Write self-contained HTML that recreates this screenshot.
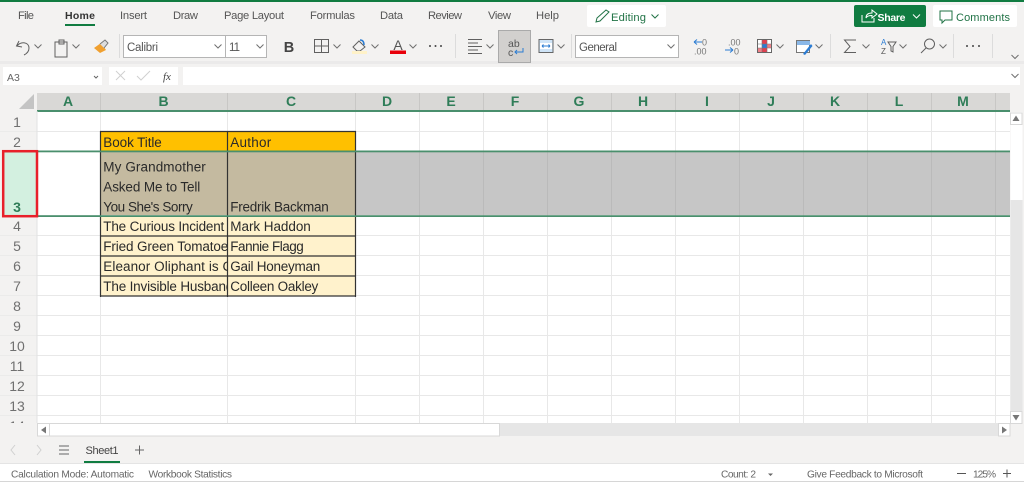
<!DOCTYPE html>
<html><head><meta charset="utf-8"><style>
html,body{margin:0;padding:0;background:#f3f2f1;width:1024px;height:482px;overflow:hidden}
svg{display:block;font-family:"Liberation Sans",Arial,sans-serif;filter:blur(.3px)}
.t{font-size:11.2px;fill:#555}
.c{font-size:13.5px;fill:#2a2a2a}
.h{font-size:14px;font-weight:bold;fill:#2f7d58;text-anchor:middle}
.r{font-size:14px;fill:#707070;text-anchor:middle}
.s{font-size:10.2px;fill:#666}
.g{stroke:#e8e8e8;stroke-width:1;fill:none}
.i{fill:none;stroke:#606060;stroke-width:1}
</style></head><body>
<svg width="1024" height="482" viewBox="0 0 1024 482" xmlns="http://www.w3.org/2000/svg">
<defs>
<path id="v" d="M-3.5 -2 L0 1.5 L3.5 -2" fill="none" stroke="#707070" stroke-width="1"/>
<clipPath id="cb"><rect x="100" y="216" width="127" height="80"/></clipPath>
</defs>
<rect width="1024" height="482" fill="#f3f2f1"/>
<rect width="1024" height="2" fill="#107c41"/>
<rect y="61" width="1024" height="3" fill="#ebeaea"/>

<!-- tabs -->
<text class="t" x="18" y="19" textLength="16">File</text>
<text class="t" x="65" y="19" textLength="30" style="fill:#333;font-weight:bold;font-size:10.5px">Home</text>
<rect x="65" y="24" width="30" height="2" fill="#107c41"/>
<text class="t" x="120" y="19" textLength="27">Insert</text>
<text class="t" x="173" y="19" textLength="25">Draw</text>
<text class="t" x="224" y="19" textLength="60">Page Layout</text>
<text class="t" x="310" y="19" textLength="45">Formulas</text>
<text class="t" x="380" y="19" textLength="23">Data</text>
<text class="t" x="428" y="19" textLength="34">Review</text>
<text class="t" x="488" y="19" textLength="23">View</text>
<text class="t" x="536" y="19" textLength="23">Help</text>

<!-- editing -->
<rect x="587" y="5" width="79" height="22" rx="2" fill="#fff"/>
<path d="M596 22 L597 18 L606 10 L609 12 L600 21 Z" fill="none" stroke="#217346"/>
<text x="611" y="21" font-size="11.200" fill="#217346" textLength="35">Editing</text>
<path d="M651.500 14.500 L655 18 L658.500 14.500" fill="none" stroke="#217346"/>
<!-- share -->
<rect x="854" y="5" width="72" height="22" rx="2" fill="#107c41"/>
<path d="M862 15 V22 H874 V18 M866 18 C866 14 869 13 872 13 V10 L877 14 L872 18 V15.500 C869 15.500 867 16 866 18 Z" fill="none" stroke="#fff"/>
<text x="877.500" y="21" font-size="10.500" font-weight="bold" fill="#fff" textLength="28">Share</text>
<path d="M913 14.500 L916.500 18 L920 14.500" fill="none" stroke="#fff"/>
<!-- comments -->
<rect x="933" y="5" width="84" height="22" rx="2" fill="#fff"/>
<path d="M940 11 H952 V20 H945 L942 23 V20 H940 Z" fill="none" stroke="#217346"/>
<text x="956" y="21" font-size="11" fill="#217346" textLength="54">Comments</text>

<!-- undo -->
<path d="M19 41 L16.500 46 L22 47 M17 46 C21 41 29 42 29 48 C29 52 26 54 24 55" class="i"/>
<use href="#v" x="38" y="46.500"/>
<!-- paste -->
<path d="M56 42 H59 M64 42 H67 V57 H55 V42 Z M59 40 H64 V44 H59 Z" class="i"/>
<use href="#v" x="76" y="46.500"/>
<!-- brush -->
<path d="M94 48 L101 43 L106 50 L100 53 Z" fill="#f0a030"/>
<path d="M100 44 L105 40 L108 43 L104 48" fill="#ddd" stroke="#777"/>
<line x1="119.500" y1="34" x2="119.500" y2="58" stroke="#dcdcdc"/>

<!-- font -->
<rect x="123.500" y="35.500" width="102" height="22" fill="#fff" stroke="#b5b5b5"/>
<text x="127" y="51" font-size="11.500" fill="#555" textLength="31">Calibri</text>
<use href="#v" x="218" y="46.500"/>
<rect x="225.500" y="35.500" width="41" height="22" fill="#fff" stroke="#b5b5b5"/>
<text x="229" y="51" font-size="11.500" fill="#555" textLength="11">11</text>
<use href="#v" x="260" y="46.500"/>
<text x="289" y="52" font-size="14.500" font-weight="bold" fill="#444" text-anchor="middle">B</text>
<!-- borders -->
<path d="M314.500 39.500 H328.500 V52.500 H314.500 Z M321.500 39.500 V52.500 M314.500 46 H328.500" class="i"/>
<use href="#v" x="337" y="46.500"/>
<!-- fill -->
<path d="M353 47 L359 41 L365 47 L360 51 H357 Z" class="i"/>
<path d="M360 40 C363 40 364 42 364 45" fill="none" stroke="#2b7cd3" stroke-width="1.500"/>
<rect x="352" y="51" width="15" height="3" fill="#fff2c8"/>
<use href="#v" x="375" y="46.500"/>
<!-- font colour -->
<text x="398" y="50" font-size="14" fill="#555" text-anchor="middle">A</text>
<rect x="390" y="50.500" width="16" height="3.500" fill="#e8000b"/>
<use href="#v" x="413" y="46.500"/>
<circle cx="430" cy="46" r="1" fill="#444"/><circle cx="435.500" cy="46" r="1" fill="#444"/><circle cx="441" cy="46" r="1" fill="#444"/>
<line x1="455.500" y1="34" x2="455.500" y2="58" stroke="#dcdcdc"/>
<!-- align -->
<path d="M468 39.500 H482 M468 43 H478 M468 46.500 H482 M468 50 H478 M468 53.500 H482" class="i"/>
<use href="#v" x="490" y="46.500"/>
<!-- wrap -->
<rect x="498.500" y="30.500" width="32" height="32" fill="#d2d0ce" stroke="#aaa"/>
<text x="508" y="47" font-size="10.500" fill="#555">ab</text>
<text x="508" y="56" font-size="10.500" fill="#555">c</text>
<path d="M523 48 V52 H515 M517 50 L515 52 L517 54" fill="none" stroke="#2b7cd3"/>
<!-- merge -->
<rect x="539" y="39.500" width="14" height="13" fill="#cfe4f7" stroke="#666"/>
<rect x="540" y="43" width="12" height="6" fill="#fff"/>
<path d="M542 46 H550 M542 46 L543.500 44.500 M542 46 L543.500 47.500 M550 46 L548.500 44.500 M550 46 L548.500 47.500" fill="none" stroke="#2b7cd3"/>
<use href="#v" x="561" y="46.500"/>
<line x1="571.500" y1="34" x2="571.500" y2="58" stroke="#dcdcdc"/>
<!-- general -->
<rect x="575.500" y="35.500" width="103" height="22" fill="#fff" stroke="#b5b5b5"/>
<text x="579" y="51" font-size="11.500" fill="#555" textLength="38">General</text>
<use href="#v" x="671" y="46.500"/>
<!-- decimals -->
<path d="M694 42 H702 M694 42 L697 39.500 M694 42 L697 44.500" fill="none" stroke="#2b7cd3"/>
<text x="702" y="45.500" font-size="9" fill="#777">0</text>
<text x="694" y="54.500" font-size="9" fill="#777">.00</text>
<text x="728" y="45.500" font-size="9" fill="#777">.00</text>
<path d="M725 50 H733 M733 50 L730 47.500 M733 50 L730 52.500" fill="none" stroke="#2b7cd3"/>
<text x="734" y="54.500" font-size="9" fill="#777">0</text>
<!-- conditional -->
<rect x="757.500" y="39.500" width="14" height="13" fill="#fff" stroke="#666"/>
<rect x="762" y="40" width="5" height="4" fill="#e04050"/><rect x="762" y="44" width="5" height="4" fill="#2b7cd3"/><rect x="758" y="48" width="4" height="4" fill="#f08088"/><rect x="762" y="48" width="5" height="4" fill="#e04050"/><rect x="767" y="44" width="4" height="4" fill="#f08088"/>
<path d="M757.500 44 H771.500 M757.500 48 H771.500 M762 39.500 V52.500 M767 39.500 V52.500" fill="none" stroke="#777" stroke-width=".6"/>
<use href="#v" x="780" y="46.500"/>
<!-- table style -->
<rect x="796.500" y="40.500" width="13" height="12" fill="#fff" stroke="#777"/>
<rect x="797" y="41" width="13" height="4" fill="#8ab8e8"/>
<path d="M803 54 L811 44 L812.500 46 L805 55 Z" fill="#2b7cd3"/>
<use href="#v" x="819" y="46.500"/>
<line x1="830.500" y1="34" x2="830.500" y2="58" stroke="#dcdcdc"/>
<!-- sigma -->
<path d="M856 40 H844.500 L850 46.500 L844.500 52.500 H856" class="i"/>
<use href="#v" x="866" y="46.500"/>
<!-- sort -->
<text x="881" y="45" font-size="8" fill="#2b7cd3">A</text>
<text x="881" y="54" font-size="8" fill="#555">Z</text>
<path d="M888 42 H896 L893 46.500 V52 L891 51 V46.500 Z" class="i"/>
<use href="#v" x="903" y="46.500"/>
<!-- search -->
<circle cx="929.500" cy="44" r="5" class="i"/>
<path d="M926 48 L921 53" class="i"/>
<use href="#v" x="943" y="46.500"/>
<line x1="953.500" y1="34" x2="953.500" y2="58" stroke="#dcdcdc"/>
<circle cx="967" cy="46" r="1" fill="#444"/><circle cx="973" cy="46" r="1" fill="#444"/><circle cx="979" cy="46" r="1" fill="#444"/>
<line x1="992.500" y1="34" x2="992.500" y2="58" stroke="#dcdcdc"/>
<use href="#v" x="1015" y="57"/>

<!-- formula bar -->
<rect x="3" y="67" width="99" height="18" fill="#fff"/>
<text x="7" y="81" font-size="10.500" fill="#666">A3</text>
<path d="M94 76 L96 78 L98 76" fill="none" stroke="#666"/>
<rect x="109" y="67" width="69" height="18" fill="#fff"/>
<path d="M116 71 L125 80 M125 71 L116 80" fill="none" stroke="#d0d0d0"/>
<path d="M137 76 L141 80 L150 71" fill="none" stroke="#d0d0d0"/>
<text x="163" y="80" font-size="11" font-family="Liberation Serif" font-style="italic" fill="#444">fx</text>
<rect x="183" y="67" width="837" height="18" fill="#fff"/>
<use href="#v" x="1015" y="76"/>

<!-- grid bg -->
<rect x="37" y="111" width="973" height="312" fill="#fff"/>
<!-- column header -->
<rect x="37" y="93" width="973" height="17" fill="#d9d8d6"/>
<path d="M19 109 H34 V94 Z" fill="#c4c4c4"/>
<g stroke="#c8c7c5"><path d="M100.500 93V110M227.500 93V110M355.500 93V110M419.500 93V110M483.500 93V110M547.500 93V110M611.500 93V110M675.500 93V110M739.500 93V110M803.500 93V110M867.500 93V110M931.500 93V110M995.500 93V110"/></g>
<text class="h" x="68" y="106">A</text><text class="h" x="163.500" y="106">B</text><text class="h" x="291" y="106">C</text><text class="h" x="387" y="106">D</text><text class="h" x="451" y="106">E</text><text class="h" x="515" y="106">F</text><text class="h" x="579" y="106">G</text><text class="h" x="643" y="106">H</text><text class="h" x="707" y="106">I</text><text class="h" x="771" y="106">J</text><text class="h" x="835" y="106">K</text><text class="h" x="899" y="106">L</text><text class="h" x="963" y="106">M</text>
<rect x="37" y="110" width="973" height="2" fill="#4a8f6d"/>

<!-- grid lines -->
<path class="g" d="M100.500 112V423M227.500 112V423M355.500 112V423M419.500 112V423M483.500 112V423M547.500 112V423M611.500 112V423M675.500 112V423M739.500 112V423M803.500 112V423M867.500 112V423M931.500 112V423M995.500 112V423"/>
<path class="g" d="M37 131.500H1010M37 235.500H1010M37 255.500H1010M37 275.500H1010M37 295.500H1010M37 315.500H1010M37 335.500H1010M37 355.500H1010M37 375.500H1010M37 395.500H1010M37 415.500H1010"/>

<!-- row numbers -->
<path d="M0 131.500H37M0 235.500H37M0 255.500H37M0 275.500H37M0 295.500H37M0 315.500H37M0 335.500H37M0 355.500H37M0 375.500H37M0 395.500H37M0 415.500H37" stroke="#ebebea" fill="none"/>
<rect x="36.500" y="111" width="1" height="312" fill="#e2e2e2"/>
<text class="r" x="17" y="127">1</text><text class="r" x="17" y="147">2</text><text class="r" x="17" y="231">4</text><text class="r" x="17" y="251">5</text><text class="r" x="17" y="271">6</text><text class="r" x="17" y="291">7</text><text class="r" x="17" y="311">8</text><text class="r" x="17" y="331">9</text><text class="r" x="17" y="351">10</text><text class="r" x="17" y="371">11</text><text class="r" x="17" y="391">12</text><text class="r" x="17" y="411">13</text><text class="r" x="17" y="431">14</text>
<rect x="0" y="423" width="37" height="13" fill="#f3f2f1"/>

<!-- selected row -->
<rect x="100" y="152" width="910" height="63" fill="#c6c6c6"/>
<path d="M419.500 152V215M483.500 152V215M547.500 152V215M611.500 152V215M675.500 152V215M739.500 152V215M803.500 152V215M867.500 152V215M931.500 152V215M995.500 152V215" stroke="#bababa"/>
<rect x="4" y="152" width="33" height="64" fill="#d3f0e0"/>
<text x="17" y="212" font-size="14" font-weight="bold" fill="#2f7d58" text-anchor="middle">3</text>

<!-- table -->
<rect x="100" y="131" width="255" height="20" fill="#ffc000"/>
<rect x="100" y="152" width="255" height="63" fill="#c4baa0"/>
<rect x="100" y="216" width="255" height="80" fill="#fff2cc"/>
<path d="M100 131.500H356M100 236H356M100 256H356M100 276H356M100 296H356M100.500 131V297M227.500 131V297M355.500 131V297" stroke="#333" stroke-width="1.200" fill="none"/>
<rect x="3" y="150.500" width="1007" height="1.800" fill="#4a8f6d"/>
<rect x="3" y="215.200" width="1007" height="1.800" fill="#4a8f6d"/>
<rect x="3.200" y="151.200" width="33.800" height="65" fill="none" stroke="#e8202a" stroke-width="2.500"/>

<text class="c" x="103.300" y="147" textLength="58.500">Book Title</text>
<text class="c" x="230.300" y="147" textLength="41">Author</text>
<text class="c" x="103.300" y="171.500" textLength="102.500">My Grandmother</text>
<text class="c" x="103.300" y="191.500" textLength="97">Asked Me to Tell</text>
<text class="c" x="103.300" y="211.500" textLength="89.500">You She's Sorry</text>
<text class="c" x="230.300" y="211.500" textLength="98.500">Fredrik Backman</text>
<text class="c" x="103.300" y="231" textLength="121">The Curious Incident</text>
<text class="c" x="230.300" y="231" textLength="80.500">Mark Haddon</text>
<text class="c" x="103.300" y="251" textLength="125" clip-path="url(#cb)">Fried Green Tomatoe</text>
<text class="c" x="230.300" y="251" textLength="73.500">Fannie Flagg</text>
<text class="c" x="103.300" y="271" textLength="129" clip-path="url(#cb)">Eleanor Oliphant is C</text>
<text class="c" x="230.300" y="271" textLength="90">Gail Honeyman</text>
<text class="c" x="103.300" y="291" textLength="130" clip-path="url(#cb)">The Invisible Husband</text>
<text class="c" x="230.300" y="291" textLength="88">Colleen Oakley</text>

<!-- vertical scrollbar -->
<rect x="1010" y="93" width="14" height="343" fill="#f3f2f1"/>
<rect x="1010.500" y="124" width="12" height="287" fill="#e6e6e6"/>
<rect x="1010.500" y="112" width="12" height="88" fill="#fff"/>
<rect x="1010.500" y="113" width="11.500" height="11.500" fill="#fff" stroke="#d8d8d8"/>
<path d="M1012.500 121 L1016 115.500 L1019.500 121 Z" fill="#777"/>
<rect x="1010.500" y="411.500" width="11.500" height="12" fill="#fff" stroke="#d8d8d8"/>
<path d="M1012.500 415 L1016 420.500 L1019.500 415 Z" fill="#777"/>

<!-- horizontal scrollbar -->
<rect x="37" y="423" width="973" height="13" fill="#e6e6e6"/>
<rect x="37.500" y="423.500" width="462" height="12.500" fill="#fff" stroke="#d8d8d8"/>
<rect x="37.500" y="423.500" width="12" height="12.500" fill="#fff" stroke="#d8d8d8"/>
<path d="M46 426.500 L41 430 L46 433.500 Z" fill="#777"/>
<rect x="998.500" y="423.500" width="11.500" height="12.500" fill="#fff" stroke="#d8d8d8"/>
<path d="M1002 426.500 L1007 430 L1002 433.500 Z" fill="#777"/>

<!-- sheet tabs -->
<path d="M15 445 L11 450 L15 455" fill="none" stroke="#d0d0d0"/>
<path d="M37 445 L41 450 L37 455" fill="none" stroke="#d0d0d0"/>
<path d="M59 446H69M59 450H69M59 454H69" fill="none" stroke="#666"/>
<text x="85.500" y="454" font-size="11" fill="#444" textLength="33">Sheet1</text>
<rect x="84" y="461" width="36" height="2" fill="#107c41"/>
<path d="M135 450H144M139.500 445.500V454.500" fill="none" stroke="#666"/>

<!-- status -->
<rect y="463" width="1024" height="18" fill="#fff"/>
<rect y="463" width="1024" height="1" fill="#e4e4e4"/>
<rect y="481" width="1024" height="1" fill="#d6d6d6"/>
<text class="s" x="11" y="477.500" textLength="123">Calculation Mode: Automatic</text>
<text class="s" x="148.500" y="477.500" textLength="83.500">Workbook Statistics</text>
<text class="s" x="721" y="477.500" textLength="35">Count: 2</text>
<path d="M768 473.500 L770.500 476 L773 473.500 Z" fill="#666"/>
<text class="s" x="807" y="477.500" textLength="116">Give Feedback to Microsoft</text>
<path d="M957 473.500H966M1003 473.500H1011M1007 469.500V477.500" fill="none" stroke="#555"/>
<text class="s" x="973" y="477.500" textLength="23">125%</text>
</svg>
</body></html>
